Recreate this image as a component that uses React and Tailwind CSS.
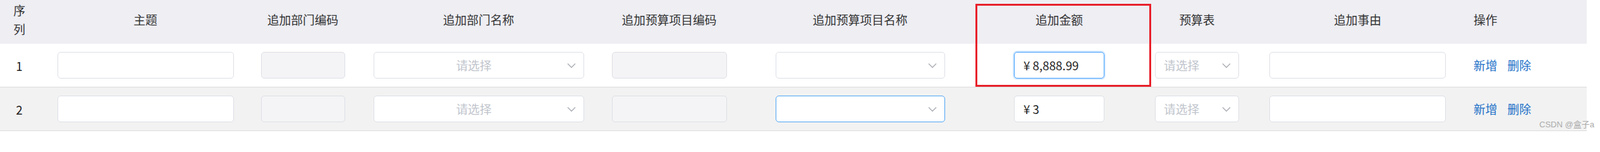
import React from "react";

const Chevron = () => (
  <svg width="14" height="9" viewBox="0 0 14 9" className="shrink-0">
    <path d="M1 1.5 L7 7.5 L13 1.5" fill="none" stroke="#a8abb2" strokeWidth="1.3" />
  </svg>
);

const Input = ({ w, disabled }) => (
  <div
    className={
      "h-[42px] rounded-[5px] border border-[#dcdfe6] " +
      (disabled ? "bg-[#f4f4f6] " : "bg-white ") +
      w
    }
  />
);

const SelectCenter = ({ w, focus, placeholder }) => (
  <div
    className={
      "flex h-[42px] items-center rounded-[5px] border bg-white pl-[15px] pr-[12px] " +
      (focus ? "border-[#4aa3f5] " : "border-[#dcdfe6] ") +
      w
    }
  >
    <span className="flex-1 pr-[4px] text-center text-[#c0c4cc]">{placeholder}</span>
    <Chevron />
  </div>
);

const Row = ({ n, bg, amount, amountFocus, nameFocus }) => (
  <div className={"flex h-[69px] w-[2510px] border-b border-[#dcdcdc] " + bg}>
    <div className="flex w-[61px] shrink-0 items-center justify-center pt-[2px] text-[#222]">{n}</div>
    <div className="flex w-[338px] shrink-0 items-center justify-center">
      <Input w="w-[279px]" />
    </div>
    <div className="flex w-[160px] shrink-0 items-center justify-center">
      <Input w="w-[133px]" disabled />
    </div>
    <div className="flex w-[396px] shrink-0 items-center justify-center">
      <SelectCenter w="w-[333px]" placeholder="请选择" />
    </div>
    <div className="flex w-[207px] shrink-0 items-center justify-center">
      <Input w="w-[182px]" disabled />
    </div>
    <div className="flex w-[397px] shrink-0 items-center justify-center">
      <SelectCenter w="w-[268px]" placeholder="" focus={nameFocus} />
    </div>
    <div className="flex w-[233px] shrink-0 items-center justify-center">
      <div
        className={
          "flex h-[42px] w-[143px] items-center rounded-[5px] border bg-white pl-[14px] text-[#1f1f1f] " +
          (amountFocus
            ? "border-[#409eff] shadow-[0_0_0_2px_rgba(64,158,255,0.22)]"
            : "border-[#dcdfe6]")
        }
      >
        {amount}
      </div>
    </div>
    <div className="flex w-[203px] shrink-0 items-center justify-center">
      <div className="flex h-[42px] w-[133px] items-center rounded-[5px] border border-[#dcdfe6] bg-white pl-[13px] pr-[12px]">
        <span className="flex-1 text-[#c0c4cc]">请选择</span>
        <Chevron />
      </div>
    </div>
    <div className="flex w-[305px] shrink-0 items-center justify-center">
      <Input w="w-[279px]" />
    </div>
    <div className="flex w-[210px] shrink-0 items-center gap-[16px] pl-[31px] text-[#2070c8]">
      <span>新增</span>
      <span>删除</span>
    </div>
  </div>
);

export default function App() {
  return (
    <div className="relative h-[213px] w-[2531px] overflow-hidden bg-white font-['Noto_Sans_CJK_SC','Noto_Sans',sans-serif] text-[18.75px] leading-[30px]">
      <div className="flex h-[69px] w-[2510px] bg-[#eeeef3] pb-[8px] text-[#333]">
        <div className="flex w-[61px] shrink-0 flex-col items-center justify-center">
          <span>序</span>
          <span>列</span>
        </div>
        <div className="flex w-[338px] shrink-0 items-center justify-center">主题</div>
        <div className="flex w-[160px] shrink-0 items-center justify-center">追加部门编码</div>
        <div className="flex w-[396px] shrink-0 items-center justify-center">追加部门名称</div>
        <div className="flex w-[207px] shrink-0 items-center justify-center">追加预算项目编码</div>
        <div className="flex w-[397px] shrink-0 items-center justify-center">追加预算项目名称</div>
        <div className="flex w-[233px] shrink-0 items-center justify-center">追加金额</div>
        <div className="flex w-[203px] shrink-0 items-center justify-center">预算表</div>
        <div className="flex w-[305px] shrink-0 items-center justify-center">追加事由</div>
        <div className="flex w-[210px] shrink-0 items-center pl-[31px]">操作</div>
      </div>
      <Row n="1" bg="bg-white" amount="¥ 8,888.99" amountFocus />
      <Row n="2" bg="bg-[#f2f2f2]" amount="¥ 3" nameFocus />

      <div className="pointer-events-none absolute left-[1543px] top-[6px] h-[131px] w-[278px] border-[3px] border-[#e8202a]" />
      <div className="absolute left-[2435px] top-[189px] font-['Liberation_Sans','Noto_Sans_CJK_SC',sans-serif] text-[13px] leading-[15px] text-[#ababab]">
        CSDN @盒子a
      </div>
    </div>
  );
}
